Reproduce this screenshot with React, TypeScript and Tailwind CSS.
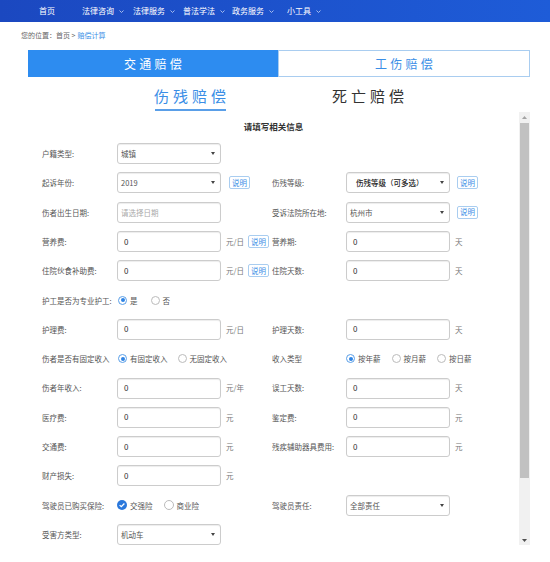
import React from "react";

const Chevron = () => (
  <svg width="5" height="3" viewBox="0 0 5 3" className="ml-[5px] mt-[1px]">
    <path d="M0.5 0.5 L2.5 2.5 L4.5 0.5" fill="none" stroke="#c9d6f5" strokeWidth="0.8" />
  </svg>
);

const Arrow = () => (
  <svg width="4" height="3" viewBox="0 0 4 3" className="ml-auto mr-[5px]">
    <polygon points="0,0 4,0 2,3" fill="#444" />
  </svg>
);

const boxCls =
  "w-[104px] h-[21px] border border-[#ccc] rounded-[3px] shadow-[inset_0_1px_1px_rgba(0,0,0,0.075)] flex items-center bg-white";

const Inp = ({ v }: { v: string }) => (
  <div className={boxCls + " pl-[6px] text-[8px] text-[#333]"}>{v}</div>
);

const DateInp = () => (
  <div className={boxCls + " pl-[3px] text-[7.5px] text-[#aaa]"}>请选择日期</div>
);

const Sel = ({ v, strong }: { v: string; strong?: boolean }) => (
  <div
    className={
      boxCls +
      (strong
        ? " pl-[9px] text-[7.5px] text-[#222] font-medium"
        : " pl-[3px] text-[7.5px] text-[#555]")
    }
  >
    <span>{v}</span>
    <Arrow />
  </div>
);

const Explain = ({ ml }: { ml: string }) => (
  <span
    className={
      "inline-flex items-center h-[13px] px-[2px] border border-[#a9cdf0] rounded-[2px] text-[7.5px] text-[#3a8ee6] leading-none " +
      ml
    }
  >
    说明
  </span>
);

const Unit = ({ u }: { u: string }) => (
  <span className="ml-[5px] text-[7.5px] text-[#777]">{u}</span>
);

const Radio = ({ checked, label, gap }: { checked?: boolean; label: string; gap?: string }) => (
  <span className={"inline-flex items-center " + (gap || "")}>
    <span
      className={
        "w-[9px] h-[9px] rounded-full border flex items-center justify-center " +
        (checked ? "border-[#5a9fe8]" : "border-[#bbb]")
      }
    >
      {checked && <span className="w-[4px] h-[4px] rounded-full bg-[#2f84e4]" />}
    </span>
    <span className="ml-[3px] text-[7.5px] text-[#555]">{label}</span>
  </span>
);

const Check = ({ checked, label, gap }: { checked?: boolean; label: string; gap?: string }) => (
  <span className={"inline-flex items-center " + (gap || "")}>
    {checked ? (
      <svg width="10" height="10" viewBox="0 0 10 10">
        <circle cx="5" cy="5" r="5" fill="#2a78dc" />
        <path d="M2.6 5.1 L4.3 6.7 L7.4 3.5" fill="none" stroke="#fff" strokeWidth="1.3" />
      </svg>
    ) : (
      <span className="w-[10px] h-[10px] rounded-full border border-[#bbb]" />
    )}
    <span className="ml-[3px] text-[7.5px] text-[#555]">{label}</span>
  </span>
);

const Lbl = ({ t }: { t: string }) => (
  <span className="text-[7.5px] text-[#555] whitespace-nowrap">{t}</span>
);

const Row = ({ children }: { children: React.ReactNode }) => (
  <div className="grid grid-cols-[75px_104px_51px_74px_104px_1fr] items-center h-[29.3px] pl-[14px]">
    {children}
  </div>
);

const Extra = ({ children }: { children?: React.ReactNode }) => (
  <div className="flex items-center">{children}</div>
);

export default function App() {
  return (
    <div className="w-[550px] h-[562px] bg-white overflow-hidden font-['Noto_Sans_CJK_SC','Noto_Sans',sans-serif]">
      {/* nav */}
      <div className="h-[22px] bg-gradient-to-r from-[#1b48c0] to-[#1e5cd8] flex items-center text-white text-[8px]">
        <div className="ml-[39px] w-[43px]">首页</div>
        <div className="w-[51px] flex items-center">法律咨询<Chevron /></div>
        <div className="w-[50px] flex items-center">法律服务<Chevron /></div>
        <div className="w-[49px] flex items-center">普法学法<Chevron /></div>
        <div className="w-[55px] flex items-center">政务服务<Chevron /></div>
        <div className="flex items-center">小工具<Chevron /></div>
      </div>
      {/* breadcrumb */}
      <div className="h-[26px] flex items-center pl-[21px] text-[7px] text-[#666]">
        您的位置：首页 &gt; <span className="ml-[2px] text-[#3a8ee6]">赔偿计算</span>
      </div>
      {/* main tabs */}
      <div className="mt-[2px] ml-[28px] w-[502px] h-[27px] flex">
        <div className="w-[250px] bg-[#2d8cf0] text-white text-[12px] tracking-[3.3px] flex items-center justify-center pl-[3px]">
          交通赔偿
        </div>
        <div className="flex-1 border border-[#a9cdf0] text-[#3a8ee6] text-[12px] tracking-[3.3px] flex items-center justify-center pl-[3px]">
          工伤赔偿
        </div>
      </div>
      {/* sub tabs */}
      <div className="ml-[28px] w-[502px] h-[35px] flex justify-center">
        <div className="w-[178px] flex flex-col items-center pt-[9px]">
          <div className="text-[15px] leading-[20px] tracking-[4px] pl-[4px] text-[#3a8ee6]">伤残赔偿</div>
          <div className="mt-[3px] w-[71px] h-[2px] bg-[#5a9fe8]" />
        </div>
        <div className="w-[178px] flex flex-col items-center pt-[9px]">
          <div className="text-[15px] leading-[20px] tracking-[4px] pl-[4px] text-[#333]">死亡赔偿</div>
        </div>
      </div>
      {/* panel */}
      <div className="ml-[28px] w-[502px] h-[433px] flex">
        <div className="flex-1 overflow-hidden">
          <div className="h-[27px] flex items-center justify-center pt-[2px] text-[8.5px] font-bold text-[#333]">
            请填写相关信息
          </div>
          <Row>
            <Lbl t="户籍类型:" />
            <Sel v="城镇" />
            <Extra />
            <div />
            <div />
          </Row>
          <Row>
            <Lbl t="起诉年份:" />
            <Sel v="2019" />
            <Extra><Explain ml="ml-[8px]" /></Extra>
            <Lbl t="伤残等级:" />
            <Sel v="伤残等级（可多选）" strong />
            <Extra><Explain ml="ml-[7px]" /></Extra>
          </Row>
          <Row>
            <Lbl t="伤者出生日期:" />
            <DateInp />
            <Extra />
            <Lbl t="受诉法院所在地:" />
            <Sel v="杭州市" />
            <Extra><Explain ml="ml-[7px]" /></Extra>
          </Row>
          <Row>
            <Lbl t="营养费:" />
            <Inp v="0" />
            <Extra><Unit u="元/日" /><Explain ml="ml-[4px]" /></Extra>
            <Lbl t="营养期:" />
            <Inp v="0" />
            <Extra><Unit u="天" /></Extra>
          </Row>
          <Row>
            <Lbl t="住院伙食补助费:" />
            <Inp v="0" />
            <Extra><Unit u="元/日" /><Explain ml="ml-[4px]" /></Extra>
            <Lbl t="住院天数:" />
            <Inp v="0" />
            <Extra><Unit u="天" /></Extra>
          </Row>
          <Row>
            <Lbl t="护工是否为专业护工:" />
            <div className="col-span-2 flex items-center pl-[1px]">
              <Radio checked label="是" />
              <Radio label="否" gap="ml-[13px]" />
            </div>
          </Row>
          <Row>
            <Lbl t="护理费:" />
            <Inp v="0" />
            <Extra><Unit u="元/日" /></Extra>
            <Lbl t="护理天数:" />
            <Inp v="0" />
            <Extra><Unit u="天" /></Extra>
          </Row>
          <Row>
            <Lbl t="伤者是否有固定收入" />
            <div className="col-span-2 flex items-center pl-[1px]">
              <Radio checked label="有固定收入" />
              <Radio label="无固定收入" gap="ml-[10px]" />
            </div>
            <Lbl t="收入类型" />
            <div className="col-span-2 flex items-center">
              <Radio checked label="按年薪" />
              <Radio label="按月薪" gap="ml-[11px]" />
              <Radio label="按日薪" gap="ml-[11px]" />
            </div>
          </Row>
          <Row>
            <Lbl t="伤者年收入:" />
            <Inp v="0" />
            <Extra><Unit u="元/年" /></Extra>
            <Lbl t="误工天数:" />
            <Inp v="0" />
            <Extra><Unit u="天" /></Extra>
          </Row>
          <Row>
            <Lbl t="医疗费:" />
            <Inp v="0" />
            <Extra><Unit u="元" /></Extra>
            <Lbl t="鉴定费:" />
            <Inp v="0" />
            <Extra><Unit u="元" /></Extra>
          </Row>
          <Row>
            <Lbl t="交通费:" />
            <Inp v="0" />
            <Extra><Unit u="元" /></Extra>
            <Lbl t="残疾辅助器具费用:" />
            <Inp v="0" />
            <Extra><Unit u="元" /></Extra>
          </Row>
          <Row>
            <Lbl t="财产损失:" />
            <Inp v="0" />
            <Extra><Unit u="元" /></Extra>
          </Row>
          <Row>
            <Lbl t="驾驶员已购买保险:" />
            <div className="col-span-2 flex items-center">
              <Check checked label="交强险" />
              <Check label="商业险" gap="ml-[11px]" />
            </div>
            <Lbl t="驾驶员责任:" />
            <Sel v="全部责任" />
            <Extra />
          </Row>
          <Row>
            <Lbl t="受害方类型:" />
            <Sel v="机动车" />
            <Extra />
          </Row>
        </div>
        {/* scrollbar */}
        <div className="w-[11px] bg-[#f1f1f1] flex flex-col">
          <div className="h-[10px] flex items-center justify-center">
            <svg width="5" height="3" viewBox="0 0 5 3"><polygon points="0,3 5,3 2.5,0" fill="#a3a3a3" /></svg>
          </div>
          <div className="mt-[1px] mx-[1px] h-[355px] bg-[#c1c1c1]" />
          <div className="flex-1" />
          <div className="h-[10px] flex items-center justify-center">
            <svg width="5" height="3" viewBox="0 0 5 3"><polygon points="0,0 5,0 2.5,3" fill="#505050" /></svg>
          </div>
        </div>
      </div>
    </div>
  );
}
